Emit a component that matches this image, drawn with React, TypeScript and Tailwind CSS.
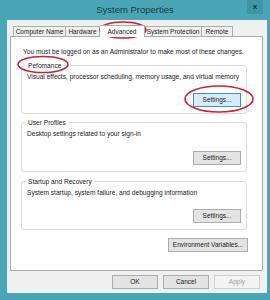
import React from "react";

const font = { fontFamily: '"Liberation Sans", Arial, sans-serif' };

function Btn({ label, w, hi, disabled }: { label: string; w: string; hi?: boolean; disabled?: boolean }) {
  return (
    <div
      className={
        "flex items-center justify-center h-[14px] text-[6.5px] border " +
        w +
        " " +
        (hi
          ? "bg-[#d7ebf8] border-[#3d8fce]"
          : disabled
          ? "bg-[#f4f4f4] border-[#d0d0d0] text-[#a0a0a0]"
          : "bg-[#e3e3e3] border-[#adadad]")
      }
    >
      {label}
    </div>
  );
}

function Group({ title, desc, hi, h }: { title: string; desc: string; hi?: boolean; h: string }) {
  return (
    <div className={"relative mx-[10px] mr-[15px] border border-[#dcdcdc] rounded-[3px] flex flex-col " + h}>
      <div className="absolute left-[4px] -top-[5px] bg-white px-[2px] leading-[9px] text-[6.6px] whitespace-nowrap">{title}</div>
      <div className="mt-[6px] ml-[5px] leading-[9px] text-[6.6px] whitespace-nowrap">{desc}</div>
      <div className="flex-1" />
      <div className="flex justify-end pr-[5px] pb-[6px]">
        <Btn label="Settings..." w="w-[48px]" hi={hi} />
      </div>
    </div>
  );
}

export default function App() {
  return (
    <div className="relative w-[270px] h-[300px] bg-[#4aa6b6] flex flex-col text-[#222]" style={font}>
      <div className="relative h-[20px] flex items-center justify-center">
        <span className="text-[9.5px] text-[#173a42]">System Properties</span>
        <div className="absolute right-[7px] top-0 w-[16px] h-[14px] bg-[#3f95a5] flex items-center justify-center text-[8px] font-bold text-[#15303a]">
          x
        </div>
      </div>
      <div className="ml-[7px] mr-[3px] h-[273px] bg-[#f0f0f0] flex flex-col">
        <div className="flex mt-[6px] ml-[6px] h-[10px] items-end text-[6.5px] whitespace-nowrap">
          <div className="h-[10px] w-[53px] border border-b-0 border-[#adadad] bg-[#f0f0f0] flex items-center justify-center">Computer Name</div>
          <div className="h-[10px] w-[34px] border border-l-0 border-b-0 border-[#adadad] bg-[#f0f0f0] flex items-center justify-center">Hardware</div>
          <div className="h-[12px] -mb-[1px] w-[45px] border border-l-0 border-b-0 border-[#adadad] bg-white flex items-center justify-center relative z-10">Advanced</div>
          <div className="h-[10px] w-[57px] border border-l-0 border-b-0 border-[#adadad] bg-[#f0f0f0] flex items-center justify-center">System Protection</div>
          <div className="h-[10px] w-[31px] border border-l-0 border-b-0 border-[#adadad] bg-[#f0f0f0] flex items-center justify-center">Remote</div>
        </div>
        <div className="mx-[3px] mr-[4px] h-[235px] bg-white border border-[#adadad] flex flex-col">
          <div className="mt-[10px] ml-[12px] leading-[9px] text-[6.6px] whitespace-nowrap">
            You must be logged on as an Administrator to make most of these changes.
          </div>
          <div className="mt-[9px]">
            <Group title="Pefomance" desc="Visual effects, processor scheduling, memory usage, and virtual memory" hi h="h-[49px]" />
          </div>
          <div className="mt-[8px]">
            <Group title="User Profiles" desc="Desktop settings related to your sign-in" h="h-[50px]" />
          </div>
          <div className="mt-[9px]">
            <Group title="Startup and Recovery" desc="System startup, system failure, and debugging information" h="h-[49px]" />
          </div>
          <div className="flex justify-end mr-[14px] mt-[8px]">
            <Btn label="Environment Variables..." w="w-[80px]" />
          </div>
        </div>
        <div className="flex justify-end gap-[5px] mt-[4px] mr-[7px]">
          <Btn label="OK" w="w-[46px]" />
          <Btn label="Cancel" w="w-[46px]" />
          <Btn label="Apply" w="w-[46px]" disabled />
        </div>
      </div>
      <svg className="absolute inset-0 pointer-events-none" width="270" height="300">
        <ellipse cx="123" cy="30" rx="23" ry="8" fill="none" stroke="#d0202c" strokeWidth="1.6" />
        <ellipse cx="43" cy="64.5" rx="25" ry="8" fill="none" stroke="#d0202c" strokeWidth="1.6" />
        <ellipse cx="219" cy="99" rx="34" ry="13" fill="none" stroke="#d0202c" strokeWidth="1.6" />
      </svg>
    </div>
  );
}
